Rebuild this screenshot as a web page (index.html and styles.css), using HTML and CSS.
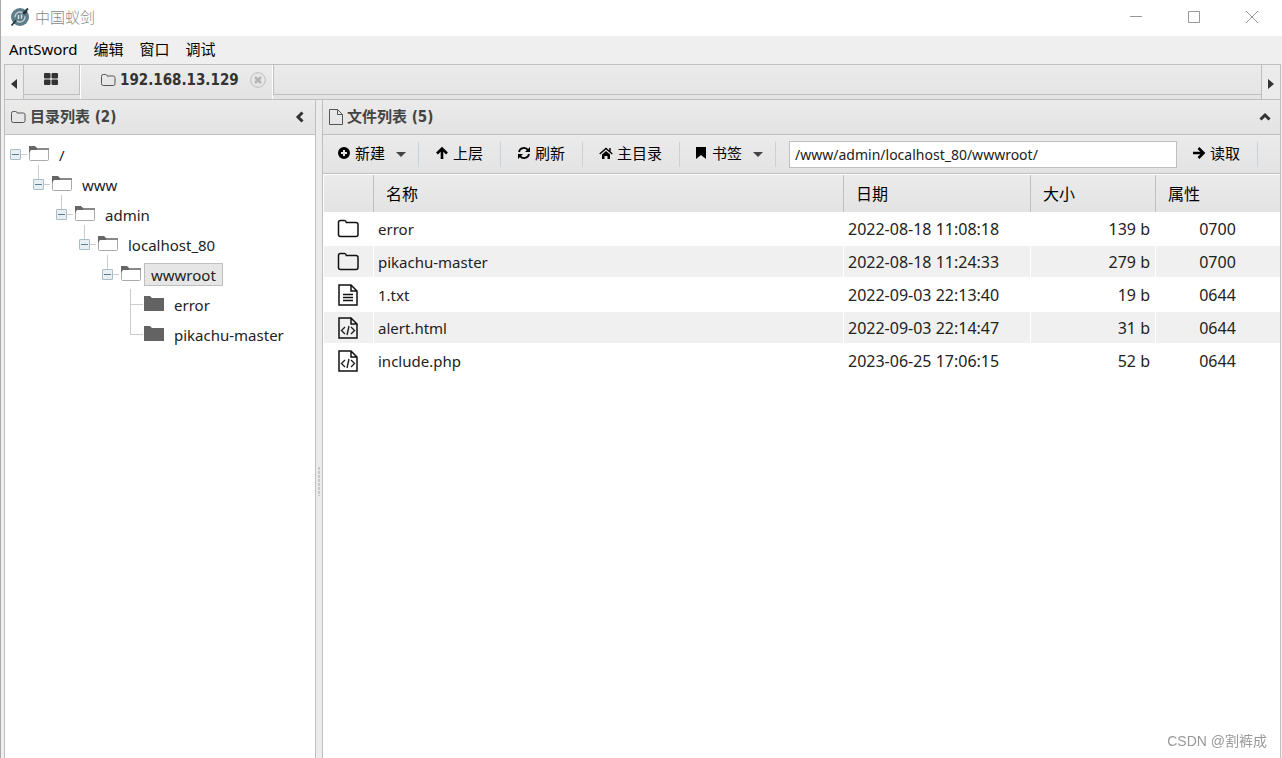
FILE: index.html
```html
<!DOCTYPE html>
<html lang="zh-CN">
<head>
<meta charset="utf-8">
<title>中国蚁剑</title>
<link rel="stylesheet" href="styles.css">
</head>
<body>
<svg class="defs" aria-hidden="true">
  <symbol id="folder-o" viewBox="0 0 15 12"><path d="M.5 9.500V2.300Q.5.500 2.200.500h2.300q1.300 0 1.500 1.200v.3h6.300q1.700 0 1.700 1.700v5.800q0 2-1.700 2H2.200Q.5 11.500.5 9.500z" fill="none" stroke="currentColor"/></symbol>
  <symbol id="tree-open" viewBox="0 0 22 17"><path d="M1.500 4.500v10q0 1 1 1h17q1 0 1-1V4.500z" fill="#fff" stroke="#aaa"/><path d="M1 4h20" stroke="#888" stroke-width="2"/><path d="M1 1h6l2 2v2H3L1 8z" fill="#666"/></symbol>
  <symbol id="tree-closed" viewBox="0 0 22 17"><path d="M1 1h6l2 2h12v13H1z" fill="#636363"/></symbol>
  <symbol id="big-folder" viewBox="0 0 22 22"><path d="M1.500 16.500v-12q0-2 2-2h4q1.500 0 1.800 2h9.500q2.200 0 2.200 2v10q0 2-2 2H3.500q-2 0-2-2z" fill="none" stroke="#111" stroke-width="1.500"/></symbol>
  <symbol id="page" viewBox="0 0 22 22"><path d="M2 1h12l6 6v14H2zM14 1v6h6" fill="none" stroke="#111" stroke-width="1.500"/></symbol>
</svg>
<div class="window">
  <header class="titlebar">
    <svg class="logo" viewBox="0 0 20 20"><circle cx="10" cy="10" r="9" fill="#5c7c89"/><circle cx="10" cy="10" r="5" fill="none" stroke="#c0cdd2" stroke-width="1.500" stroke-dasharray="11 4"/><path d="M8.500 8v4M11.500 7.500v4" stroke="#dce3e6" stroke-width="1.400"/><path d="M1.500 18.500 6 13.500M13 6.500 18 1.500M14 7l3-3" stroke="#26343c" stroke-width="1.800"/></svg>
    <h1 class="app-name">中国蚁剑</h1>
    <div class="controls">
      <button aria-label="最小化"><svg viewBox="0 0 14 14"><path d="M1 6.500h12"/></svg></button>
      <button aria-label="最大化"><svg viewBox="0 0 14 14"><path d="M1.500 1.500h11v11h-11z"/></svg></button>
      <button aria-label="关闭"><svg viewBox="0 0 14 14"><path d="m1 1 12 12M13 1 1 13"/></svg></button>
    </div>
  </header>
  <nav class="menubar"><button>AntSword</button><button>编辑</button><button>窗口</button><button>调试</button></nav>
  <main class="frame">
    <div class="tabbar">
      <button class="scroll" aria-label="向左"><svg viewBox="0 0 6 10"><path d="M6 0v10L0 5z"/></svg></button>
      <button class="tab home" aria-label="主页"><svg viewBox="0 0 14 12"><rect width="6.500" height="5.500" rx="1"/><rect x="7.500" width="6.500" height="5.500" rx="1"/><rect y="6.500" width="6.500" height="5.500" rx="1"/><rect x="7.500" y="6.500" width="6.500" height="5.500" rx="1"/></svg></button>
      <div class="tab active"><svg class="small-folder"><use href="#folder-o"/></svg><span>192.168.13.129</span><button class="close" aria-label="关闭标签"><svg viewBox="0 0 16 16"><circle cx="8" cy="8" r="7.300" fill="none" stroke="#bbb"/><path d="m5 5 6 6M11 5l-6 6" stroke="#b5b5b5" stroke-width="2.600"/></svg></button></div>
      <div class="tab-fill"></div>
      <button class="scroll right" aria-label="向右"><svg viewBox="0 0 6 10"><path d="M0 0v10l6-5z"/></svg></button>
    </div>
    <div class="panes">
      <section class="pane tree-pane">
        <div class="pane-head"><svg class="small-folder"><use href="#folder-o"/></svg><h2>目录列表 (2)</h2><button class="chevron" aria-label="折叠"><svg viewBox="0 0 12 12"><path d="M8.500 1.500 4 6l4.500 4.500"/></svg></button></div>
        <ul class="tree">
          <li><div class="node"><button class="toggle" aria-label="收起"></button><svg><use href="#tree-open"/></svg><span class="label">/</span></div>
          <ul><li><div class="node"><button class="toggle" aria-label="收起"></button><svg><use href="#tree-open"/></svg><span class="label">www</span></div>
          <ul><li><div class="node"><button class="toggle" aria-label="收起"></button><svg><use href="#tree-open"/></svg><span class="label">admin</span></div>
          <ul><li><div class="node"><button class="toggle" aria-label="收起"></button><svg><use href="#tree-open"/></svg><span class="label">localhost_80</span></div>
          <ul><li><div class="node"><button class="toggle" aria-label="收起"></button><svg><use href="#tree-open"/></svg><span class="label selected">wwwroot</span></div>
          <ul>
            <li><div class="node leaf"><span class="branch"></span><svg><use href="#tree-closed"/></svg><span class="label">error</span></div></li>
            <li><div class="node leaf last"><span class="branch"></span><svg><use href="#tree-closed"/></svg><span class="label">pikachu-master</span></div></li>
          </ul></li></ul></li></ul></li></ul></li></ul></li>
        </ul>
      </section>
      <div class="splitter"><span class="grip"></span></div>
      <section class="pane file-pane">
        <div class="pane-head"><svg class="doc" viewBox="0 0 14 16"><path d="M.5.500h8l5 5v10H.5zM8.500.500v5h5" fill="none" stroke="#555"/></svg><h2>文件列表 (5)</h2><button class="chevron" aria-label="折叠"><svg viewBox="0 0 12 12"><path d="M1.500 8.500 6 4l4.500 4.500"/></svg></button></div>
        <div class="toolbar">
          <button class="tool new"><svg viewBox="0 0 14 14"><path fill-rule="evenodd" d="M7 1a6 6 0 1 0 0 12A6 6 0 0 0 7 1zM6 4h2v2h2v2H8v2H6V8H4V6h2z"/></svg>新建<i class="caret"></i></button>
          <button class="tool up"><svg viewBox="0 0 14 14"><path d="M7 13V3M2 7.500 7 2.500l5 5" class="line"/></svg>上层</button>
          <button class="tool refresh"><svg viewBox="0 0 14 14"><path d="M2 6a5 5 0 0 1 9-2M12 8a5 5 0 0 1-9 2" fill="none" stroke="#000" stroke-width="1.800"/><path d="M13 1v5H8zM1 13V8h5z"/></svg>刷新</button>
          <button class="tool main"><svg viewBox="0 0 14 14"><path d="M3 8.500 7 5l4 3.500V13H8.500v-3h-3v3H3z"/><path d="M.7 8 7 2.500 13.300 8M11 2v4" fill="none" stroke="#000" stroke-width="1.400"/></svg>主目录</button>
          <button class="tool mark"><svg viewBox="0 0 14 14"><path d="M2 1h10v12L7 9l-5 4z"/></svg>书签<i class="caret"></i></button>
          <input class="path" type="text" aria-label="路径" value="/www/admin/localhost_80/wwwroot/">
          <button class="tool read"><svg viewBox="0 0 14 14"><path d="M1 7h10M6.500 2l5 5-5 5" class="line"/></svg>读取</button>
        </div>
        <table class="files">
          <colgroup><col class="c-icon"><col><col class="c-date"><col class="c-size"><col class="c-attr"></colgroup>
          <thead><tr><th></th><th>名称</th><th>日期</th><th>大小</th><th>属性</th></tr></thead>
          <tbody>
            <tr><td><svg><use href="#big-folder"/></svg></td><td>error</td><td>2022-08-18 11:08:18</td><td>139 b</td><td>0700</td></tr>
            <tr><td><svg><use href="#big-folder"/></svg></td><td>pikachu-master</td><td>2022-08-18 11:24:33</td><td>279 b</td><td>0700</td></tr>
            <tr><td><svg viewBox="0 0 22 22"><use href="#page"/><path d="M6 10.500h10M6 13.500h10M6 16.500h10" stroke="#111" stroke-width="1.500"/></svg></td><td>1.txt</td><td>2022-09-03 22:13:40</td><td>19 b</td><td>0644</td></tr>
            <tr><td><svg viewBox="0 0 22 22"><use href="#page"/><path d="m8 10-3.500 3.500L8 17M14 10l3.500 3.500L14 17M12 9l-2 9" fill="none" stroke="#222" stroke-width="1.400"/></svg></td><td>alert.html</td><td>2022-09-03 22:14:47</td><td>31 b</td><td>0644</td></tr>
            <tr><td><svg viewBox="0 0 22 22"><use href="#page"/><path d="m8 10-3.500 3.500L8 17M14 10l3.500 3.500L14 17M12 9l-2 9" fill="none" stroke="#222" stroke-width="1.400"/></svg></td><td>include.php</td><td>2023-06-25 17:06:15</td><td>52 b</td><td>0644</td></tr>
          </tbody>
        </table>
      </section>
    </div>
  </main>
  <div class="watermark">CSDN @割裤成</div>
</div>
</body>
</html>
```
FILE: styles.css
```css
* { box-sizing: border-box; }
body { margin: 0; font: 16px/20px "Noto Sans", "Noto Sans CJK SC", sans-serif; color: #222; }
button { border: 0; padding: 0; margin: 0; background: none; font: inherit; color: inherit; }
svg { display: block; flex: none; }
h1, h2 { margin: 0; }
ul { list-style: none; margin: 0; padding: 0; }
.defs { position: absolute; width: 0; height: 0; }
.window { min-height: 100vh; display: flex; flex-direction: column; background: #efefef; border-left: 1px solid #aaa; }

.titlebar { display: flex; align-items: center; height: 36px; padding: 0 1px 2px 9px; background: #fff; }
.logo { width: 20px; height: 20px; }
.app-name { margin-left: 5px; font-size: 15px; font-weight: 300; color: #888; }
.controls { display: flex; margin-left: auto; }
.controls button { width: 58px; height: 34px; display: grid; place-items: center; }
.controls svg { width: 14px; height: 14px; fill: none; stroke: #999; }

.menubar { display: flex; align-items: center; gap: 16px; height: 28px; padding: 0 0 2px 8px; font-size: 15px; color: #000; }

.frame { flex: 1; display: flex; flex-direction: column; margin: 0 1px 0 3px; border: 1px solid #bfbfbf; border-bottom: 0; }
.tabbar { display: flex; height: 35px; background: linear-gradient(#ebebeb, #e3e3e3); border-bottom: 1px solid #bfbfbf; }
.scroll { width: 19px; display: grid; place-items: center; padding-top: 3px; border-right: 1px solid #bfbfbf; background: #ebebeb; }
.scroll.right { border-right: 0; border-left: 1px solid #bfbfbf; }
.scroll svg { width: 6px; height: 10px; fill: #333; }
.tab { display: flex; align-items: center; height: 30px; }
.home { width: 56px; padding: 0 2px 2px 0; justify-content: center; border-right: 1px solid #bfbfbf; border-bottom: 1px solid #bfbfbf; }
.home svg { width: 14px; height: 12px; fill: #333; }
.active { height: 34px; padding: 0 6px 4px 20px; border-left: 1px solid #fff; border-right: 1px solid #fff; font: bold 15px/20px "DejaVu Sans Condensed", "DejaVu Sans", sans-serif; color: #333; }
.active span { margin-left: 4px; }
.small-folder { width: 15px; height: 12px; color: #555; }
.close { margin-left: 11px; }
.close svg { width: 16px; height: 16px; }
.tab-fill { flex: 1; height: 30px; border-left: 1px solid #bfbfbf; border-bottom: 1px solid #bfbfbf; }

.panes { flex: 1; display: flex; }
.pane { display: flex; flex-direction: column; background: #fff; }
.tree-pane { width: 311px; flex: none; border-right: 1px solid #bfbfbf; }
.file-pane { flex: 1; min-width: 0; border-left: 1px solid #bfbfbf; }
.splitter { width: 6px; display: grid; place-items: center; background: #ebebeb; }
.grip { width: 2px; height: 29px; margin-top: 105px; background: repeating-linear-gradient(#c8c8c8 0 3px, #ebebeb 3px 4px); }
.pane-head { display: flex; align-items: center; height: 35px; padding: 0 9px 0 6px; background: linear-gradient(#ebebeb, #e3e3e3); border-bottom: 1px solid #bfbfbf; }
.pane-head h2 { margin-left: 4px; font: bold 15px/20px "DejaVu Sans Condensed", "Noto Sans CJK SC", sans-serif; color: #444; }
.doc { width: 14px; height: 16px; }
.chevron { margin-left: auto; }
.chevron svg { width: 12px; height: 12px; fill: none; stroke: #333; stroke-width: 3; }

.tree { padding: 4px 0 0 5px; font-size: 15px; }
.tree ul { padding-left: 23px; }
.node { position: relative; display: flex; align-items: center; height: 30px; }
.node svg { width: 22px; height: 17px; margin-bottom: 2px; }
.toggle { position: relative; width: 11px; height: 11px; margin: 0 7px 0 0; border: 1px solid #a9bdc6; border-radius: 1px; background: linear-gradient(#607d8b, #607d8b) center / 7px 1px no-repeat #e8eff2; }
.toggle::after { content: ""; position: absolute; left: 10px; top: 4px; width: 6px; height: 1px; background: #ccc; }
.tree ul .toggle::before { content: ""; position: absolute; left: 4px; top: -15px; width: 1px; height: 14px; background: #ccc; }
.branch { align-self: flex-start; width: 13px; height: 16px; margin: 0 0 0 5px; border-left: 1px solid #ccc; border-bottom: 1px solid #ccc; }
.leaf:not(.last)::before { content: ""; position: absolute; left: 5px; top: 0; width: 1px; height: 30px; background: #ccc; }
.label { margin-left: 2px; padding: 1px 6px 0; border: 1px solid transparent; line-height: 20px; }
.selected { background: #e6e6e6; border-color: #bfbfbf; }

.toolbar { display: flex; align-items: center; height: 39px; background: linear-gradient(#ebebeb, #e3e3e3); border-bottom: 1px solid #bfbfbf; }
.tool { display: flex; align-items: center; gap: 4px; height: 25px; padding: 0 17px 3px 16px; border-right: 1px solid #c5d3da; font-size: 15px; color: #000; white-space: nowrap; }
.tool svg { width: 14px; height: 14px; }
.tool .line { fill: none; stroke: #000; stroke-width: 2.600; }
.new { padding: 0 12px 3px 14px; }
.mark { padding: 0 12px 3px 14px; }
.caret { margin: 3px 0 0 7px; border: 5px solid transparent; border-top-color: #444; border-bottom: 0; }
.path { flex: 1; min-width: 0; height: 27px; margin: 0 0 0 13px; padding: 0 5px; border: 1px solid #bfbfbf; background: #fff; font: 14px/20px "Noto Sans", sans-serif; color: #222; }
.read { margin-right: 22px; padding-left: 15px; }

.files { width: 100%; padding: 1px 0 0 1px; border-spacing: 0; table-layout: fixed; }
.c-icon { width: 50px; }
.c-date { width: 187px; }
.c-size { width: 125px; }
.c-attr { width: 124px; }
.files th { height: 37px; padding: 0 12px; background: linear-gradient(#ebebeb, #e3e3e3); border-right: 1px solid #bfbfbf; text-align: left; font-weight: 400; color: #000; }
.files td { height: 33px; padding: 0 5px 0 4px; border: solid #fff; border-width: 1px 1px 1px 0; }
.files tr > :last-child { border-right: 0; }
.files td:first-child { padding: 0 0 0 13px; }
.files td:nth-child(2) { font-size: 15px; }
.files td:nth-child(4) { text-align: right; }
.files td:last-child { text-align: center; }
.files tbody tr:nth-child(even) td { background: #f0f0f0; }
.files td svg { width: 22px; height: 22px; }

.watermark { position: fixed; right: 15px; bottom: 7px; font-size: 14px; font-family: "Liberation Sans", "Noto Sans CJK SC", sans-serif; color: #999; }
```
